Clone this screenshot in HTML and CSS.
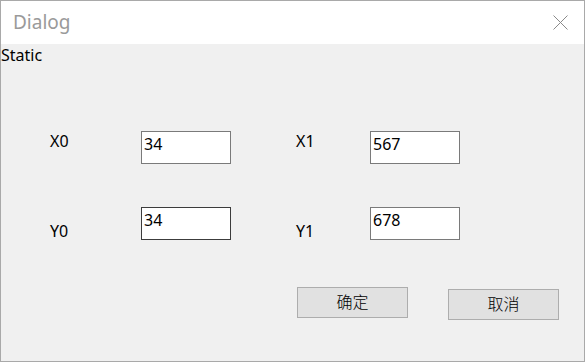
FILE: index.html
```html
<!DOCTYPE html>
<html>
<head>
<meta charset="utf-8">
<link rel="stylesheet" href="styles.css">
</head>
<body>
<div class="window">
  <div class="titlebar">
    <span class="title">Dialog</span>
    <svg class="close" width="15" height="15" viewBox="0 0 15 15">
      <path d="M0.5 0.5 L14.5 14.5 M14.5 0.5 L0.5 14.5" stroke="#8a8a8a" stroke-width="1" fill="none"/>
    </svg>
  </div>
  <div class="content">
    <div class="static">Static</div>
    <div class="fields">
      <div class="label top">X0</div>
      <div class="edit">34</div>
      <div class="label top">X1</div>
      <div class="edit">567</div>
      <div class="label low">Y0</div>
      <div class="edit focused">34</div>
      <div class="label low">Y1</div>
      <div class="edit">678</div>
    </div>
    <div class="buttons">
      <div class="btn">确定</div>
      <div class="btn second">取消</div>
    </div>
  </div>
</div>
</body>
</html>
```

FILE: styles.css
```css
html, body {
  margin: 0;
  padding: 0;
  background: #ffffff;
}
.window {
  width: 585px;
  height: 362px;
  box-sizing: border-box;
  border: 1px solid #a9a9a9;
  display: flex;
  flex-direction: column;
  font-family: "Noto Sans", "Noto Sans CJK SC", sans-serif;
  color: #000;
  overflow: hidden;
}
.titlebar {
  height: 43px;
  flex: none;
  background: #ffffff;
  display: flex;
  align-items: center;
  justify-content: space-between;
  padding: 0 16px 0 12px;
}
.title {
  font-size: 19px;
  color: #9a9a9a;
  line-height: 24px;
  margin-top: -2px;
}
.close {
  display: block;
  margin-top: -1px;
}
.content {
  flex: 1;
  background: #f0f0f0;
  display: flex;
  flex-direction: column;
}
.static {
  font-size: 16px;
  line-height: 20px;
  padding-top: 1px;
}
.fields {
  margin-top: 66px;
  padding-left: 49px;
  display: grid;
  grid-template-columns: 91px 155px 74px 90px;
  row-gap: 43px;
}
.label {
  font-size: 16px;
  line-height: 20px;
}
.label.low {
  margin-top: 14px;
}
.edit {
  width: 90px;
  height: 33px;
  box-sizing: border-box;
  border: 1px solid #7a7a7a;
  background: #ffffff;
  font-size: 16px;
  line-height: 20px;
  padding: 2px 0 0 2px;
}
.edit.focused {
  border-color: #3c3c3c;
}
.buttons {
  margin-top: 46px;
  padding-left: 296px;
  display: flex;
  align-items: flex-start;
  gap: 40px;
}
.btn {
  width: 111px;
  height: 31px;
  box-sizing: border-box;
  border: 1px solid #adadad;
  background: #e1e1e1;
  font-family: "Noto Sans CJK SC", sans-serif;
  font-size: 16px;
  font-weight: 300;
  line-height: 20px;
  padding-bottom: 3px;
  display: flex;
  align-items: center;
  justify-content: center;
}
.btn.second {
  margin-top: 2px;
}
```
